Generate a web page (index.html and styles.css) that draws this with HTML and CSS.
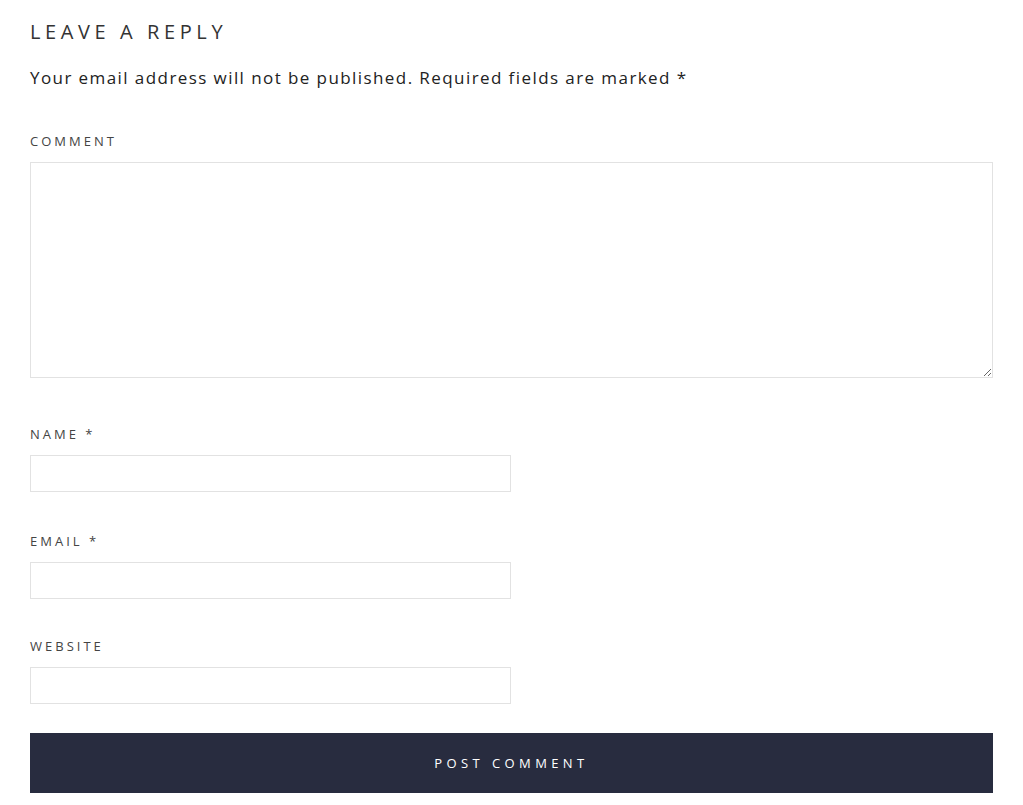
FILE: index.html
```html
<!DOCTYPE html>
<html>
<head>
<meta charset="utf-8">
<link rel="stylesheet" href="styles.css">
</head>
<body>
<div class="reply">
  <h3 class="reply-title">LEAVE A REPLY</h3>
  <p class="notes">Your email address will not be published. Required fields are marked *</p>
  <form class="form">
    <div class="field field-comment">
      <label class="label">COMMENT</label>
      <textarea class="textarea"></textarea>
    </div>
    <div class="field field-name">
      <label class="label">NAME *</label>
      <input class="input" type="text">
    </div>
    <div class="field field-email">
      <label class="label">EMAIL *</label>
      <input class="input" type="text">
    </div>
    <div class="field field-last">
      <label class="label">WEBSITE</label>
      <input class="input" type="text">
    </div>
    <button class="submit" type="button">POST COMMENT</button>
  </form>
</div>
</body>
</html>
```
FILE: styles.css
```css
html, body {
  margin: 0;
  padding: 0;
  background: #fff;
}
.reply {
  padding: 20px 30px 0 30px;
  width: 963px;
}
.reply-title {
  margin: 0;
  font-family: "Open Sans", sans-serif;
  font-weight: 400;
  font-size: 20px;
  letter-spacing: 4.6px;
  color: #333;
  line-height: 24px;
}
.notes {
  margin: 22px 0 0 0;
  font-family: "Open Sans", sans-serif;
  font-size: 17px;
  letter-spacing: 1.42px;
  color: #222;
  line-height: 24px;
}
.form {
  display: flex;
  flex-direction: column;
  margin-top: 42px;
}
.field {
  display: flex;
  flex-direction: column;
  margin-bottom: 38px;
}
.field-comment { margin-bottom: 47px; }
.field-name { margin-bottom: 40px; }
.field-email { margin-bottom: 38px; }
.field-last { margin-bottom: 29px; }
.label {
  font-family: "Open Sans", sans-serif;
  font-size: 13px;
  letter-spacing: 3px;
  color: #444;
  line-height: 18px;
  margin-bottom: 12px;
}
.textarea {
  box-sizing: border-box;
  width: 963px;
  height: 216px;
  border: 1px solid #e2e2e2;
  margin: 0;
  padding: 8px;
}
.input {
  box-sizing: border-box;
  width: 481px;
  height: 37px;
  border: 1px solid #e2e2e2;
  margin: 0;
  padding: 0 8px;
}
.submit {
  width: 963px;
  height: 60px;
  border: 0;
  background: #282c3f;
  color: #fff;
  font-family: "Open Sans", sans-serif;
  font-size: 13px;
  letter-spacing: 4.4px;
  cursor: pointer;
}
```
